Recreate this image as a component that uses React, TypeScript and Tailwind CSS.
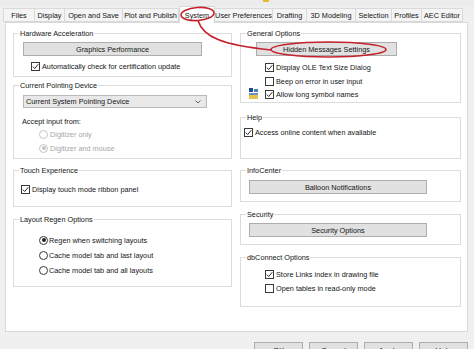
import { ReactNode } from "react";

const tabs = [
  { label: "Files", w: "w-[32px]" },
  { label: "Display", w: "w-[30px]" },
  { label: "Open and Save", w: "w-[58px]" },
  { label: "Plot and Publish", w: "w-[56px]" },
  { label: "System", w: "w-[36px]", active: true },
  { label: "User Preferences", w: "w-[58px]" },
  { label: "Drafting", w: "w-[34px]" },
  { label: "3D Modeling", w: "w-[49px]" },
  { label: "Selection", w: "w-[36px]" },
  { label: "Profiles", w: "w-[30px]" },
  { label: "AEC Editor", w: "w-[41px]" },
];

function Check({ checked }: { checked?: boolean }) {
  return (
    <span className="w-[9px] h-[9px] border border-[#3a3a3a] bg-white flex items-center justify-center shrink-0">
      {checked && (
        <svg width="7" height="7" viewBox="0 0 7 7">
          <path d="M0.8 3.6 L2.7 5.5 L6.3 1.2" fill="none" stroke="#2a2a2a" strokeWidth="1" />
        </svg>
      )}
    </span>
  );
}

function Radio({ on, disabled }: { on?: boolean; disabled?: boolean }) {
  return (
    <span
      className={`w-[9px] h-[9px] rounded-full border bg-white flex items-center justify-center shrink-0 ${
        disabled ? "border-[#c4c4c4]" : "border-[#3a3a3a]"
      }`}
    >
      {on && <span className={`w-[4px] h-[4px] rounded-full ${disabled ? "bg-[#c4c4c4]" : "bg-[#222]"}`} />}
    </span>
  );
}

function Group({ title, className, children }: { title: string; className: string; children?: ReactNode }) {
  return (
    <fieldset className={`border border-[#dcdcdc] ${className}`}>
      <legend className="ml-[5px] px-[1px] leading-[9px]">{title}</legend>
      {children}
    </fieldset>
  );
}

function Btn({ children, className }: { children: ReactNode; className: string }) {
  return (
    <div className={`h-[14px] bg-[#e1e1e1] border border-[#adadad] flex items-center justify-center ${className}`}>
      {children}
    </div>
  );
}

function CheckRow({ checked, label, className }: { checked?: boolean; label: string; className?: string }) {
  return (
    <div className={`flex items-center gap-[2px] h-[9px] ${className ?? ""}`}>
      <Check checked={checked} />
      <span>{label}</span>
    </div>
  );
}

export default function App() {
  return (
    <div className="relative w-[474px] h-[349px] overflow-hidden bg-[#f0f0f0] font-['Liberation_Sans',Arial,sans-serif] text-[7.3px] leading-[9px] text-[#151515]">
      {/* top strip */}
      <div className="h-[6px] bg-[#ececec] flex">
        <div className="ml-[263px] w-[6px] h-[2px] bg-[#e9b92c]" />
      </div>

      {/* tabs */}
      <div className="h-[16px] pl-[3px] flex items-end relative z-10">
        {tabs.map((t) =>
          t.active ? (
            <div
              key={t.label}
              className={`${t.w} h-[17px] -mb-px bg-white border border-b-0 border-[#d9d9d9] flex items-center justify-center pt-[1px]`}
            >
              {t.label}
            </div>
          ) : (
            <div
              key={t.label}
              className={`${t.w} h-[14px] bg-[#f4f4f4] border border-l-0 first:border-l border-[#d9d9d9] flex items-center justify-center`}
            >
              {t.label}
            </div>
          )
        )}
      </div>

      {/* main panel */}
      <div className="ml-[5px] w-[463px] h-[310px] bg-white border border-[#d9d9d9] flex gap-[8px] pl-[7px] pt-[5.5px]">
        {/* left column */}
        <div className="w-[219px] flex flex-col">
          <Group title="Hardware Acceleration" className="h-[48.5px]">
            <Btn className="mt-[4.5px] ml-[9px] w-[179px]">Graphics Performance</Btn>
            <CheckRow checked label="Automatically check for certification update" className="mt-[5.5px] ml-[17px]" />
          </Group>

          <Group title="Current Pointing Device" className="h-[78.5px] mt-[3.5px]">
            <div className="mt-[5.5px] ml-[9px] w-[184px] h-[13px] bg-[#e8e8e8] border border-[#b9b9b9] flex items-center justify-between pl-[2px] pr-[5px]">
              <span>Current System Pointing Device</span>
              <svg width="6" height="4" viewBox="0 0 6 4">
                <path d="M0.5 0.5 L3 3 L5.5 0.5" fill="none" stroke="#555" strokeWidth="0.9" />
              </svg>
            </div>
            <div className="mt-[8.5px] ml-[8px]">Accept input from:</div>
            <div className="mt-[4px] ml-[25px] flex items-center gap-[2px] h-[9px] text-[#a6a6a6]">
              <Radio disabled />
              <span>Digitizer only</span>
            </div>
            <div className="mt-[5px] ml-[25px] flex items-center gap-[2px] h-[9px] text-[#a6a6a6]">
              <Radio on disabled />
              <span>Digitizer and mouse</span>
            </div>
          </Group>

          <Group title="Touch Experience" className="h-[41.5px] mt-[6.5px]">
            <CheckRow checked label="Display touch mode ribbon panel" className="mt-[10px] ml-[7px]" />
          </Group>

          <Group title="Layout Regen Options" className="h-[72.5px] mt-[7.5px]">
            {[
              ["Regen when switching layouts", true],
              ["Cache model tab and last layout", false],
              ["Cache model tab and all layouts", false],
            ].map(([label, on], i) => (
              <div
                key={label as string}
                className={`${i === 0 ? "mt-[12px]" : "mt-[6px]"} ml-[25px] flex items-center gap-[1px] h-[9px]`}
              >
                <Radio on={on as boolean} />
                <span>{label as string}</span>
              </div>
            ))}
          </Group>
        </div>

        {/* right column */}
        <div className="w-[221px] flex flex-col">
          <Group title="General Options" className="h-[74.5px]">
            <Btn className="mt-[4.5px] ml-[15px] w-[141px]">Hidden Messages Settings</Btn>
            <CheckRow checked label="Display OLE Text Size Dialog" className="mt-[6.5px] ml-[24px]" />
            <CheckRow label="Beep on error in user input" className="mt-[5px] ml-[24px]" />
            <div className="mt-[4px] ml-[8px] flex items-center h-[9px]">
              <svg width="9" height="11" viewBox="0 0 9 11" className="mr-[7px] -mt-[2px]">
                <rect x="0" y="0" width="4" height="4" fill="#1f4f8f" />
                <rect x="5" y="1" width="4" height="3" fill="#4a7fc0" />
                <rect x="0" y="5" width="9" height="2" fill="#6a8fbf" />
                <rect x="0" y="7" width="9" height="4" fill="#e8c24a" />
              </svg>
              <Check checked />
              <span className="ml-[2px]">Allow long symbol names</span>
            </div>
          </Group>

          <Group title="Help" className="h-[46.5px] mt-[9.5px]">
            <CheckRow checked label="Access online content when available" className="mt-[6px] ml-[3px]" />
          </Group>

          <Group title="InfoCenter" className="h-[36.5px] mt-[6.5px]">
            <Btn className="mt-[5.5px] ml-[8px] w-[178px] h-[13px]">Balloon Notifications</Btn>
          </Group>

          <Group title="Security" className="h-[35.5px] mt-[7.5px]">
            <Btn className="mt-[4.5px] ml-[8px] w-[178px]">Security Options</Btn>
          </Group>

          <Group title="dbConnect Options" className="h-[54.5px] mt-[7.5px]">
            <CheckRow checked label="Store Links index in drawing file" className="mt-[8px] ml-[24px]" />
            <CheckRow label="Open tables in read-only mode" className="mt-[5px] ml-[24px]" />
          </Group>
        </div>
      </div>

      {/* bottom buttons */}
      <div className="mt-[10px] ml-[254px] flex gap-[6px]">
        {["OK", "Cancel", "Apply", "Help"].map((b) => (
          <div
            key={b}
            className="w-[49px] h-[14px] bg-[#e1e1e1] border border-[#adadad] border-b-0 flex justify-center pt-[3px] text-[8px] leading-[10px]"
          >
            {b}
          </div>
        ))}
      </div>

      {/* red annotation */}
      <svg className="absolute inset-0 pointer-events-none z-20" width="474" height="349" viewBox="0 0 474 349">
        <g fill="none" stroke="#c4222d" strokeWidth="1.6">
          <ellipse cx="197.5" cy="14" rx="16.5" ry="6.5" transform="rotate(-4 197.5 14)" />
          <ellipse cx="328.5" cy="49.5" rx="57.5" ry="7.5" />
          <path d="M198 20.5 C 203 37, 222 45, 271 50" />
        </g>
      </svg>
    </div>
  );
}
